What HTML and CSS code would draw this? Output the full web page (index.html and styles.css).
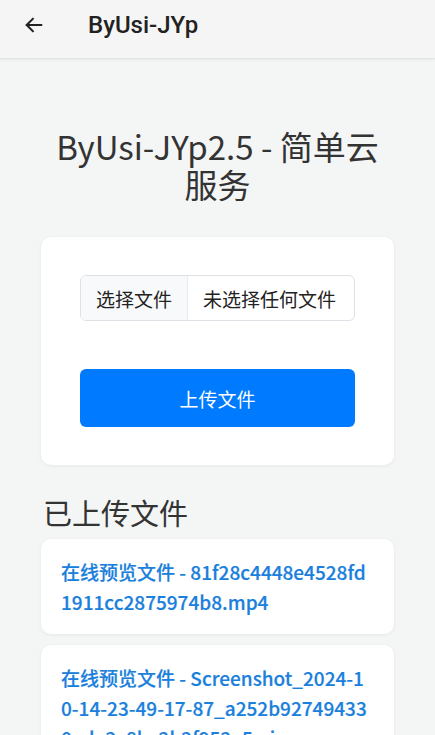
FILE: index.html
```html
<!DOCTYPE html>
<html lang="zh">

<head>
    <meta charset="UTF-8">
    <title>ByUsi-JYp</title>
    <link rel="stylesheet" href="styles.css">
</head>

<body>
    <header class="topbar">
        <svg class="back" width="22" height="22" viewBox="0 0 24 24">
            <path d="M21 12H4.5M11.5 4.5 4 12l7.5 7.5" fill="none" stroke="#222" stroke-width="2.3" />
        </svg>
        <span class="topbar-title">ByUsi-JYp</span>
    </header>

    <main class="page">
        <h1 class="title">ByUsi-JYp2.5 - 简单云服务</h1>

        <form class="card upload">
            <label class="file-input">
                <span class="file-btn">选择文件</span>
                <span class="file-name">未选择任何文件</span>
            </label>
            <button type="button" class="btn-upload">上传文件</button>
        </form>

        <h2 class="subtitle">已上传文件</h2>

        <ul class="files">
            <li class="card file"><a href="#">在线预览文件 - 81f28c4448e4528fd1911cc2875974b8.mp4</a></li>
            <li class="card file"><a href="#">在线预览文件 - Screenshot_2024-10-14-23-49-17-87_a252b927494330ede3c8bc2b2f952e5e.jpg</a></li>
        </ul>
    </main>
</body>

</html>
```

FILE: styles.css
```css
body {
    margin: 0;
    background: #f4f5f5;
    font-family: "Noto Sans CJK SC", sans-serif;
    color: #333;
}

.topbar {
    height: 58px;
    background: #f5f5f5;
    display: flex;
    align-items: center;
    border-bottom: 1px solid #e4e4e4;
    box-shadow: 0 1px 2px rgba(0, 0, 0, 0.06);
}

.back {
    margin-left: 23px;
    margin-top: -8px;
}

.topbar-title {
    margin-left: 43px;
    margin-top: -8px;
    font-family: Roboto, "Noto Sans CJK SC", sans-serif;
    font-weight: 500;
    font-size: 24px;
    color: #222;
}

.page {
    padding: 0 41px;
}

.title {
    margin: 68px 0 34px;
    text-align: center;
    font-weight: 400;
    font-size: 33px;
    line-height: 38px;
    color: #333;
}

.card {
    background: #fff;
    border-radius: 10px;
    box-shadow: 0 1px 4px rgba(0, 0, 0, 0.06);
}

.upload {
    padding: 38px 39px;
}

.file-input {
    display: flex;
    height: 44px;
    border: 1px solid #dee2e6;
    border-radius: 6px;
    overflow: hidden;
    font-size: 19px;
    color: #222;
}

.file-btn {
    display: flex;
    align-items: center;
    padding: 0 15px;
    background: #f8f9fa;
    border-right: 1px solid #e9ecef;
}

.file-name {
    display: flex;
    align-items: center;
    padding: 0 15px;
}

.btn-upload {
    display: block;
    width: 100%;
    height: 58px;
    margin-top: 48px;
    border: none;
    border-radius: 6px;
    background: #007bff;
    color: #fff;
    font-size: 19px;
    font-family: "Noto Sans CJK SC", sans-serif;
}

.subtitle {
    margin: 29px 0 9px 2px;
    font-weight: 400;
    font-size: 29px;
    line-height: 36px;
    color: #333;
}

.files {
    list-style: none;
    margin: 0;
    padding: 0;
}

.file {
    padding: 18px 20px 17px;
    margin-bottom: 11px;
}

.file a {
    color: #1b7fdc;
    font-weight: 500;
    font-size: 19px;
    line-height: 30px;
    -webkit-text-stroke: 0.2px currentColor;
    text-decoration: none;
    word-break: break-all;
}
```
